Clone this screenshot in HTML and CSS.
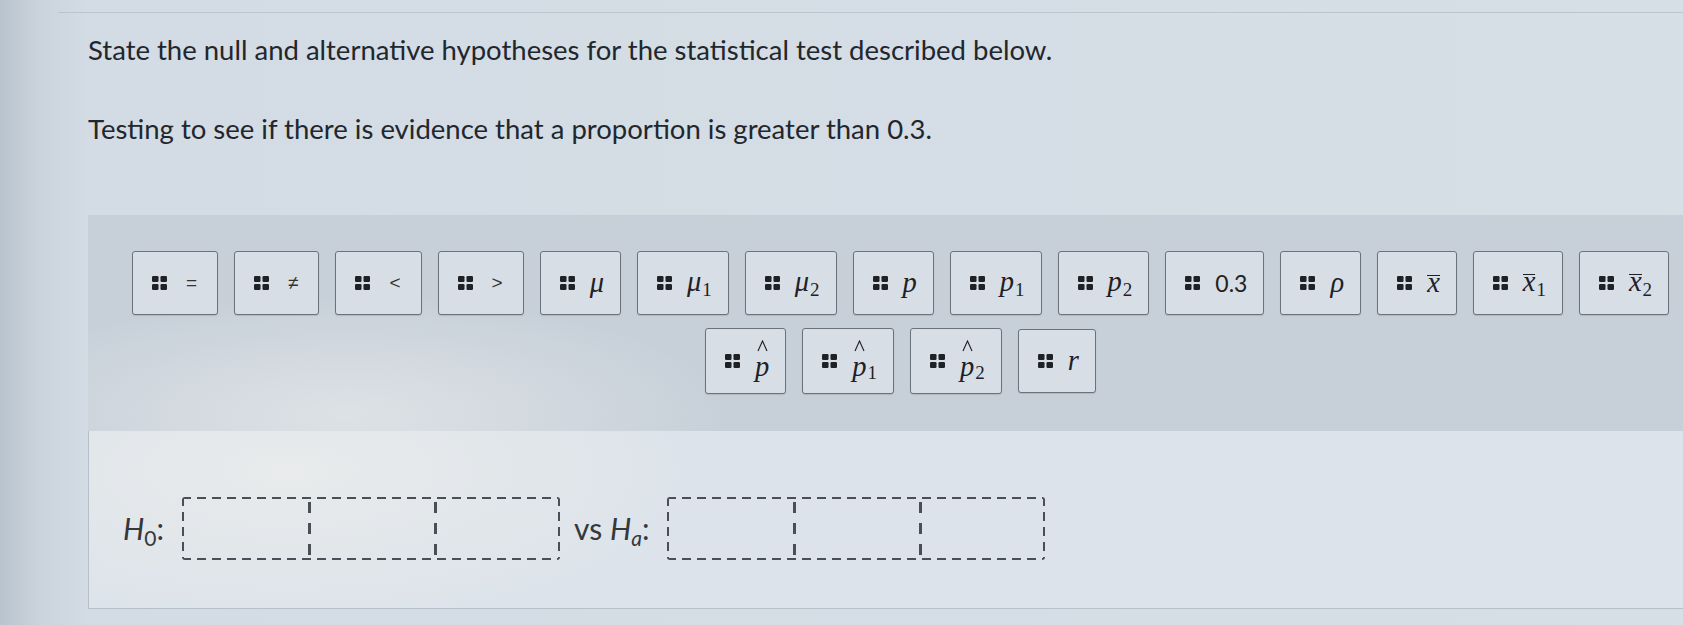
FILE: index.html
```html
<!DOCTYPE html>
<html lang="en">
<head>
    <meta charset="UTF-8">
    <meta name="viewport" content="width=device-width, initial-scale=1.0">
    <title>Hypothesis test</title>
    <link rel="stylesheet" href="styles.css">
</head>
<body>
    <div class="page">
        <div class="question">
            <p class="prompt prompt-title">State the null and alternative hypotheses for the statistical test described below.</p>
            <p class="prompt prompt-body">Testing to see if there is evidence that a proportion is greater than 0.3.</p>

            <div class="bank">
                <div class="tile-row">
                    <div class="tile"><svg class="handle" viewBox="0 0 15 14"><rect x="0" y="0" width="6.5" height="6" rx="1.2"/><rect x="8.5" y="0" width="6.5" height="6" rx="1.2"/><rect x="0" y="8" width="6.5" height="6" rx="1.2"/><rect x="8.5" y="8" width="6.5" height="6" rx="1.2"/></svg><span class="op">=</span></div>
                    <div class="tile"><svg class="handle" viewBox="0 0 15 14"><rect x="0" y="0" width="6.5" height="6" rx="1.2"/><rect x="8.5" y="0" width="6.5" height="6" rx="1.2"/><rect x="0" y="8" width="6.5" height="6" rx="1.2"/><rect x="8.5" y="8" width="6.5" height="6" rx="1.2"/></svg><span class="op">&ne;</span></div>
                    <div class="tile"><svg class="handle" viewBox="0 0 15 14"><rect x="0" y="0" width="6.5" height="6" rx="1.2"/><rect x="8.5" y="0" width="6.5" height="6" rx="1.2"/><rect x="0" y="8" width="6.5" height="6" rx="1.2"/><rect x="8.5" y="8" width="6.5" height="6" rx="1.2"/></svg><span class="op">&lt;</span></div>
                    <div class="tile"><svg class="handle" viewBox="0 0 15 14"><rect x="0" y="0" width="6.5" height="6" rx="1.2"/><rect x="8.5" y="0" width="6.5" height="6" rx="1.2"/><rect x="0" y="8" width="6.5" height="6" rx="1.2"/><rect x="8.5" y="8" width="6.5" height="6" rx="1.2"/></svg><span class="op">&gt;</span></div>
                    <div class="tile"><svg class="handle" viewBox="0 0 15 14"><rect x="0" y="0" width="6.5" height="6" rx="1.2"/><rect x="8.5" y="0" width="6.5" height="6" rx="1.2"/><rect x="0" y="8" width="6.5" height="6" rx="1.2"/><rect x="8.5" y="8" width="6.5" height="6" rx="1.2"/></svg><span class="math">&mu;</span></div>
                    <div class="tile"><svg class="handle" viewBox="0 0 15 14"><rect x="0" y="0" width="6.5" height="6" rx="1.2"/><rect x="8.5" y="0" width="6.5" height="6" rx="1.2"/><rect x="0" y="8" width="6.5" height="6" rx="1.2"/><rect x="8.5" y="8" width="6.5" height="6" rx="1.2"/></svg><span class="math">&mu;<sub>1</sub></span></div>
                    <div class="tile"><svg class="handle" viewBox="0 0 15 14"><rect x="0" y="0" width="6.5" height="6" rx="1.2"/><rect x="8.5" y="0" width="6.5" height="6" rx="1.2"/><rect x="0" y="8" width="6.5" height="6" rx="1.2"/><rect x="8.5" y="8" width="6.5" height="6" rx="1.2"/></svg><span class="math">&mu;<sub>2</sub></span></div>
                    <div class="tile"><svg class="handle" viewBox="0 0 15 14"><rect x="0" y="0" width="6.5" height="6" rx="1.2"/><rect x="8.5" y="0" width="6.5" height="6" rx="1.2"/><rect x="0" y="8" width="6.5" height="6" rx="1.2"/><rect x="8.5" y="8" width="6.5" height="6" rx="1.2"/></svg><span class="math">p</span></div>
                    <div class="tile"><svg class="handle" viewBox="0 0 15 14"><rect x="0" y="0" width="6.5" height="6" rx="1.2"/><rect x="8.5" y="0" width="6.5" height="6" rx="1.2"/><rect x="0" y="8" width="6.5" height="6" rx="1.2"/><rect x="8.5" y="8" width="6.5" height="6" rx="1.2"/></svg><span class="math">p<sub>1</sub></span></div>
                    <div class="tile"><svg class="handle" viewBox="0 0 15 14"><rect x="0" y="0" width="6.5" height="6" rx="1.2"/><rect x="8.5" y="0" width="6.5" height="6" rx="1.2"/><rect x="0" y="8" width="6.5" height="6" rx="1.2"/><rect x="8.5" y="8" width="6.5" height="6" rx="1.2"/></svg><span class="math">p<sub>2</sub></span></div>
                    <div class="tile"><svg class="handle" viewBox="0 0 15 14"><rect x="0" y="0" width="6.5" height="6" rx="1.2"/><rect x="8.5" y="0" width="6.5" height="6" rx="1.2"/><rect x="0" y="8" width="6.5" height="6" rx="1.2"/><rect x="8.5" y="8" width="6.5" height="6" rx="1.2"/></svg><span class="num">0.3</span></div>
                    <div class="tile"><svg class="handle" viewBox="0 0 15 14"><rect x="0" y="0" width="6.5" height="6" rx="1.2"/><rect x="8.5" y="0" width="6.5" height="6" rx="1.2"/><rect x="0" y="8" width="6.5" height="6" rx="1.2"/><rect x="8.5" y="8" width="6.5" height="6" rx="1.2"/></svg><span class="math">&rho;</span></div>
                    <div class="tile"><svg class="handle" viewBox="0 0 15 14"><rect x="0" y="0" width="6.5" height="6" rx="1.2"/><rect x="8.5" y="0" width="6.5" height="6" rx="1.2"/><rect x="0" y="8" width="6.5" height="6" rx="1.2"/><rect x="8.5" y="8" width="6.5" height="6" rx="1.2"/></svg><span class="math"><span class="bar">x</span></span></div>
                    <div class="tile"><svg class="handle" viewBox="0 0 15 14"><rect x="0" y="0" width="6.5" height="6" rx="1.2"/><rect x="8.5" y="0" width="6.5" height="6" rx="1.2"/><rect x="0" y="8" width="6.5" height="6" rx="1.2"/><rect x="8.5" y="8" width="6.5" height="6" rx="1.2"/></svg><span class="math"><span class="bar">x</span><sub>1</sub></span></div>
                    <div class="tile"><svg class="handle" viewBox="0 0 15 14"><rect x="0" y="0" width="6.5" height="6" rx="1.2"/><rect x="8.5" y="0" width="6.5" height="6" rx="1.2"/><rect x="0" y="8" width="6.5" height="6" rx="1.2"/><rect x="8.5" y="8" width="6.5" height="6" rx="1.2"/></svg><span class="math"><span class="bar">x</span><sub>2</sub></span></div>
                </div>
                <div class="tile-row">
                    <div class="tile tile-hat"><svg class="handle" viewBox="0 0 15 14"><rect x="0" y="0" width="6.5" height="6" rx="1.2"/><rect x="8.5" y="0" width="6.5" height="6" rx="1.2"/><rect x="0" y="8" width="6.5" height="6" rx="1.2"/><rect x="8.5" y="8" width="6.5" height="6" rx="1.2"/></svg><span class="math"><span class="hat"><svg viewBox="0 0 11 12"><polyline points="1,11 5.5,1 10,11"/></svg>p</span></span></div>
                    <div class="tile tile-hat"><svg class="handle" viewBox="0 0 15 14"><rect x="0" y="0" width="6.5" height="6" rx="1.2"/><rect x="8.5" y="0" width="6.5" height="6" rx="1.2"/><rect x="0" y="8" width="6.5" height="6" rx="1.2"/><rect x="8.5" y="8" width="6.5" height="6" rx="1.2"/></svg><span class="math"><span class="hat"><svg viewBox="0 0 11 12"><polyline points="1,11 5.5,1 10,11"/></svg>p</span><sub>1</sub></span></div>
                    <div class="tile tile-hat"><svg class="handle" viewBox="0 0 15 14"><rect x="0" y="0" width="6.5" height="6" rx="1.2"/><rect x="8.5" y="0" width="6.5" height="6" rx="1.2"/><rect x="0" y="8" width="6.5" height="6" rx="1.2"/><rect x="8.5" y="8" width="6.5" height="6" rx="1.2"/></svg><span class="math"><span class="hat"><svg viewBox="0 0 11 12"><polyline points="1,11 5.5,1 10,11"/></svg>p</span><sub>2</sub></span></div>
                    <div class="tile"><svg class="handle" viewBox="0 0 15 14"><rect x="0" y="0" width="6.5" height="6" rx="1.2"/><rect x="8.5" y="0" width="6.5" height="6" rx="1.2"/><rect x="0" y="8" width="6.5" height="6" rx="1.2"/><rect x="8.5" y="8" width="6.5" height="6" rx="1.2"/></svg><span class="math">r</span></div>
                </div>
            </div>

            <div class="answer">
                <span class="hyp"><i>H</i><sub>0</sub>:</span>
                <div class="drop">
                    <div class="slot"></div>
                    <div class="slot"></div>
                    <div class="slot"></div>
                </div>
                <span class="hyp hyp-vs">vs <i>H</i><sub><i>a</i></sub>:</span>
                <div class="drop">
                    <div class="slot"></div>
                    <div class="slot"></div>
                    <div class="slot"></div>
                </div>
            </div>
        </div>
    </div>
</body>
</html>
```

FILE: styles.css
```css
* {
    margin: 0;
    padding: 0;
    box-sizing: border-box;
}

body {
    font-family: Lato, 'Open Sans', 'Liberation Sans', sans-serif;
    background: linear-gradient(90deg, #b9c3cd 0, #cbd4dd 40px, #d3dbe4 90px, #d6dee6 100%);
    color: #22272d;
    width: 1683px;
    height: 625px;
    overflow: hidden;
}

.page {
    padding: 12px 0 0 58px;
}

.question {
    width: 1655px;
    padding-left: 30px;
    border-top: 1px solid #bcc5ce;
}

.prompt {
    font-size: 27.5px;
    line-height: 33px;
}

.prompt-title {
    margin-top: 20px;
}

.prompt-body {
    margin-top: 46px;
}

/* answer bank */
.bank {
    margin-top: 70px;
    padding: 36px 0 37px;
    background: radial-gradient(ellipse 380px 120px at 260px 200px, rgba(240, 240, 240, 0.55), rgba(240, 240, 240, 0) 100%), #c7d0d9;
    display: flex;
    flex-direction: column;
    gap: 13px;
}

.tile-row {
    display: flex;
    justify-content: center;
    align-items: center;
    gap: 16px;
}

.tile {
    display: inline-flex;
    align-items: center;
    gap: 15px;
    height: 64px;
    padding: 0 16px 0 19px;
    background: #d7dee6;
    border: 1.5px solid #6b7279;
    border-radius: 3px;
    box-shadow: 0 1px 1px rgba(0, 0, 0, 0.12);
}

.tile-hat {
    height: 66px;
}

.handle {
    width: 15px;
    height: 14px;
    fill: #1e2125;
    flex-shrink: 0;
}

.op {
    font-family: 'Liberation Sans', sans-serif;
    font-size: 19px;
    color: #333;
    margin: 0 4px;
}

.num {
    font-family: Lato, 'Liberation Sans', sans-serif;
    font-size: 23px;
    color: #222;
}

.math {
    font-family: 'Liberation Serif', 'DejaVu Serif', serif;
    font-style: italic;
    font-size: 28.5px;
    color: #1e2125;
    line-height: 1;
    white-space: nowrap;
}

.math sub {
    font-style: normal;
    font-size: 19px;
    vertical-align: -5px;
    margin-left: 1px;
}

.bar {
    display: inline-block;
    line-height: 0.45em;
    border-top: 1.5px solid #1e2125;
    padding-top: 1px;
}

.hat {
    display: inline-flex;
    flex-direction: column;
    align-items: center;
    vertical-align: bottom;
}

.hat svg {
    width: 11px;
    height: 12px;
    fill: none;
    stroke: #1e2125;
    stroke-width: 1.1;
    margin-bottom: 1px;
}

/* hypotheses */
.answer {
    height: 178px;
    padding: 66px 0 0 34px;
    display: flex;
    align-items: flex-start;
    border-left: 1px solid #b7c0c9;
    border-bottom: 1px solid #b7c0c9;
    background: radial-gradient(ellipse 420px 160px at 200px 40px, rgba(238, 238, 236, 0.7), rgba(238, 238, 236, 0) 100%), #dce3ea;
}

.hyp {
    font-size: 30px;
    line-height: 63px;
    color: #34383d;
    margin-right: 18px;
}

.hyp sub {
    font-size: 21px;
    vertical-align: -6px;
}

.hyp-vs {
    margin-left: 14px;
}

.drop {
    display: flex;
    width: 378px;
    height: 63px;
    border-radius: 3px;
    background:
        linear-gradient(90deg, #4a4f55 60%, transparent 0) top left / 15px 2px repeat-x,
        linear-gradient(90deg, #4a4f55 60%, transparent 0) bottom left / 15px 2px repeat-x,
        linear-gradient(180deg, #4a4f55 60%, transparent 0) top left / 2px 15px repeat-y,
        linear-gradient(180deg, #4a4f55 60%, transparent 0) top right / 2px 15px repeat-y;
}

.slot {
    flex: 1;
}

.slot + .slot {
    background: linear-gradient(180deg, transparent 25%, #4a4f55 25%, #4a4f55 75%, transparent 75%) left top / 3px 21px repeat-y;
}
```
